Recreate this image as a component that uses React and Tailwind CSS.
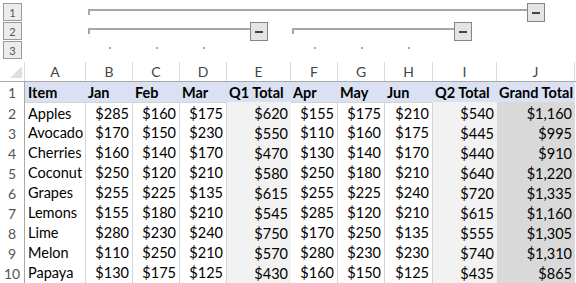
import React from "react";

const letters = ["A", "B", "C", "D", "E", "F", "G", "H", "I", "J"];

const header = ["Item", "Jan", "Feb", "Mar", "Q1 Total", "Apr", "May", "Jun", "Q2 Total", "Grand Total"];

const rows = [
  ["Apples", "$285", "$160", "$175", "$620", "$155", "$175", "$210", "$540", "$1,160"],
  ["Avocado", "$170", "$150", "$230", "$550", "$110", "$160", "$175", "$445", "$995"],
  ["Cherries", "$160", "$140", "$170", "$470", "$130", "$140", "$170", "$440", "$910"],
  ["Coconut", "$250", "$120", "$210", "$580", "$250", "$180", "$210", "$640", "$1,220"],
  ["Grapes", "$255", "$225", "$135", "$615", "$255", "$225", "$240", "$720", "$1,335"],
  ["Lemons", "$155", "$180", "$210", "$545", "$285", "$120", "$210", "$615", "$1,160"],
  ["Lime", "$280", "$230", "$240", "$750", "$170", "$250", "$135", "$555", "$1,305"],
  ["Melon", "$110", "$250", "$210", "$570", "$280", "$230", "$230", "$740", "$1,310"],
  ["Papaya", "$130", "$175", "$125", "$430", "$160", "$150", "$125", "$435", "$865"],
];

const gridCols = "grid grid-cols-[25px_61px_47px_47px_47px_64px_47px_47px_48px_64px_78px]";

const MinusBtn = () => (
  <div className="w-[18px] h-[19px] bg-[#e4e4e4] border border-[#858585] flex items-center justify-center shrink-0">
    <div className="w-[8px] h-[2px] bg-[#444]" />
  </div>
);

const LevelBtn = ({ n }) => (
  <div className="w-[19px] h-[18px] bg-[#ececec] border border-[#9a9a9a] flex items-center justify-center text-[11px] text-[#555] leading-none">
    {n}
  </div>
);

const Bracket = ({ width }) => (
  <div className={`h-[6px] border-t-2 border-l-2 border-[#a6a6a6] ${width}`} />
);

const Dot = () => <div className="w-[2px] h-[2px] bg-[#a6a6a6]" />;

function cellClass(col, isFirst) {
  if (col === 4 || col === 8) return "bg-[#f2f2f2] justify-end pr-[3px]";
  if (col === 9) return "bg-[#d9d9d9] justify-end pr-[3px]";
  const base = `bg-white border-r border-b border-[#d4d4d4] ${isFirst ? "border-t" : ""}`;
  if (col === 0) return `${base} justify-start pl-[3px]`;
  return `${base} justify-end pr-[3px]`;
}

export default function App() {
  return (
    <div
      className="w-[576px] h-[283px] bg-white overflow-hidden text-black"
      style={{ fontFamily: "Lato, 'Open Sans', sans-serif" }}
    >
      {/* outline area */}
      <div className="flex h-[62px]">
        <div className="flex flex-col gap-px pl-[3px] pt-[3px] w-[25px]">
          <LevelBtn n="1" />
          <LevelBtn n="2" />
          <LevelBtn n="3" />
        </div>
        <div className="flex flex-col pt-[3px]">
          <div className="flex items-start h-[19px] ml-[63px]">
            <div className="pt-[6px]">
              <Bracket width="w-[439px]" />
            </div>
            <MinusBtn />
          </div>
          <div className="flex items-start h-[19px] ml-[63px]">
            <div className="pt-[6px]">
              <Bracket width="w-[162px]" />
            </div>
            <MinusBtn />
            <div className="pt-[6px] ml-[24px]">
              <Bracket width="w-[162px]" />
            </div>
            <MinusBtn />
          </div>
          <div className="flex h-[19px] pt-[6px] ml-[84px]">
            <Dot />
            <div className="w-[45px]" />
            <Dot />
            <div className="w-[45px]" />
            <Dot />
            <div className="w-[109px]" />
            <Dot />
            <div className="w-[45px]" />
            <Dot />
            <div className="w-[45px]" />
            <Dot />
          </div>
        </div>
      </div>

      {/* column headers */}
      <div className={`${gridCols} h-[20px] border-b border-[#a8a8a8] text-[14px] text-[#444]`}>
        <div className="relative border-r border-[#dadada]">
          <div
            className="absolute right-[2px] bottom-[3px] w-0 h-0"
            style={{ borderRight: "12px solid #dfdfdf", borderTop: "12px solid transparent" }}
          />
        </div>
        {letters.map((l) => (
          <div key={l} className="flex items-center justify-center border-r border-[#dadada] leading-none">
            {l}
          </div>
        ))}
      </div>

      {/* header row */}
      <div className={`${gridCols} h-[20px] text-[14.5px]`}>
        <div className="flex items-center justify-center border-r border-[#a8a8a8] text-[14px] text-[#555]">1</div>
        {header.map((h, i) => (
          <div key={h} className={`flex items-center bg-[#d9e1f2] font-bold whitespace-nowrap ${i === 0 ? "pl-[3px]" : "pl-[2px]"}`}>
            {h}
          </div>
        ))}
      </div>

      {/* data rows */}
      {rows.map((r, ri) => (
        <div key={r[0]} className={`${gridCols} h-[20px] text-[14.5px]`}>
          <div className="flex items-center justify-center border-r border-[#a8a8a8] text-[14px] text-[#555]">{ri + 2}</div>
          {r.map((v, ci) => (
            <div key={ci} className={`flex items-center whitespace-nowrap ${cellClass(ci, ri === 0)}`}>
              {v}
            </div>
          ))}
        </div>
      ))}
    </div>
  );
}
